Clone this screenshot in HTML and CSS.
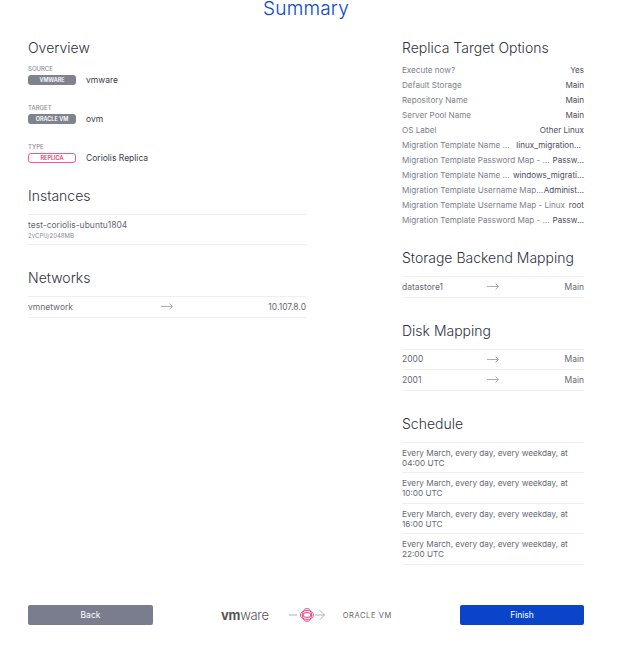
FILE: index.html
```html
<!DOCTYPE html>
<html lang="en">
<head>
    <meta charset="UTF-8">
    <meta name="viewport" content="width=device-width, initial-scale=1.0">
    <title>Summary</title>
    <link rel="stylesheet" href="styles.css">
</head>
<body>
    <div class="page">
        <h1 class="title">Summary</h1>

        <div class="columns">
            <div class="col-left">
                <div class="section overview">
                    <h2>Overview</h2>
                    <div class="field">
                        <div class="field-label">SOURCE</div>
                        <div class="field-value"><span class="pill">VMWARE</span>vmware</div>
                    </div>
                    <div class="field">
                        <div class="field-label">TARGET</div>
                        <div class="field-value"><span class="pill">ORACLE VM</span>ovm</div>
                    </div>
                    <div class="field">
                        <div class="field-label">TYPE</div>
                        <div class="field-value"><span class="pill pill-replica">REPLICA</span>Coriolis Replica</div>
                    </div>
                </div>

                <div class="section">
                    <h2>Instances</h2>
                    <div class="table">
                        <div class="instance">
                            <div class="instance-name">test-coriolis-ubuntu1804</div>
                            <div class="instance-info">2vCPU/2048MB</div>
                        </div>
                    </div>
                </div>

                <div class="section">
                    <h2>Networks</h2>
                    <div class="table">
                        <div class="map-row">
                            <span>vmnetwork</span>
                            <svg class="arrow" viewBox="0 0 12 7"><path d="M0 3.5h11.5M8.5 .5l3 3-3 3"/></svg>
                            <span class="map-target">10.107.8.0</span>
                        </div>
                    </div>
                </div>
            </div>

            <div class="col-right">
                <div class="section options-section">
                    <h2>Replica Target Options</h2>
                    <div class="options">
                        <div class="option"><span class="opt-label">Execute now?</span><span class="opt-value">Yes</span></div>
                        <div class="option"><span class="opt-label">Default Storage</span><span class="opt-value">Main</span></div>
                        <div class="option"><span class="opt-label">Repository Name</span><span class="opt-value">Main</span></div>
                        <div class="option"><span class="opt-label">Server Pool Name</span><span class="opt-value">Main</span></div>
                        <div class="option"><span class="opt-label">OS Label</span><span class="opt-value">Other Linux</span></div>
                        <div class="option"><span class="opt-label">Migration Template Name …</span><span class="opt-value opt-cut">linux_migration…</span></div>
                        <div class="option"><span class="opt-label">Migration Template Password Map - …</span><span class="opt-value opt-cut">Passw…</span></div>
                        <div class="option"><span class="opt-label">Migration Template Name …</span><span class="opt-value">windows_migrati…</span></div>
                        <div class="option option-tight"><span class="opt-label">Migration Template Username Map…</span><span class="opt-value">Administ…</span></div>
                        <div class="option"><span class="opt-label">Migration Template Username Map - Linux</span><span class="opt-value">root</span></div>
                        <div class="option"><span class="opt-label">Migration Template Password Map - …</span><span class="opt-value opt-cut">Passw…</span></div>
                    </div>
                </div>

                <div class="section storage-section">
                    <h2>Storage Backend Mapping</h2>
                    <div class="table">
                        <div class="map-row">
                            <span>datastore1</span>
                            <svg class="arrow" viewBox="0 0 12 7"><path d="M0 3.5h11.5M8.5 .5l3 3-3 3"/></svg>
                            <span class="map-target">Main</span>
                        </div>
                    </div>
                </div>

                <div class="section">
                    <h2>Disk Mapping</h2>
                    <div class="table">
                        <div class="map-row">
                            <span>2000</span>
                            <svg class="arrow" viewBox="0 0 12 7"><path d="M0 3.5h11.5M8.5 .5l3 3-3 3"/></svg>
                            <span class="map-target">Main</span>
                        </div>
                        <div class="map-row">
                            <span>2001</span>
                            <svg class="arrow" viewBox="0 0 12 7"><path d="M0 3.5h11.5M8.5 .5l3 3-3 3"/></svg>
                            <span class="map-target">Main</span>
                        </div>
                    </div>
                </div>

                <div class="section">
                    <h2>Schedule</h2>
                    <div class="table">
                        <div class="schedule-row">Every March, every day, every weekday, at 04:00 UTC</div>
                        <div class="schedule-row">Every March, every day, every weekday, at 10:00 UTC</div>
                        <div class="schedule-row">Every March, every day, every weekday, at 16:00 UTC</div>
                        <div class="schedule-row">Every March, every day, every weekday, at 22:00 UTC</div>
                    </div>
                </div>
            </div>
        </div>

        <div class="footer">
            <button class="btn btn-back">Back</button>
            <div class="logos">
                <span class="logo-vmware"><b>vm</b>ware</span>
                <svg class="logo-flow" viewBox="0 0 36 14">
                    <path class="flow-line" d="M0 7h8M26 7h9.5M31 2.5l4.5 4.5-4.5 4.5"/>
                    <g class="flow-knot">
                        <ellipse cx="18" cy="7" rx="6.5" ry="4.5"/>
                        <ellipse cx="18" cy="7" rx="4.5" ry="6.5"/>
                        <ellipse cx="18" cy="7" rx="4" ry="2.5"/>
                    </g>
                </svg>
                <span class="logo-oracle">ORACLE VM</span>
            </div>
            <button class="btn btn-finish">Finish</button>
        </div>
    </div>
</body>
</html>
```

FILE: styles.css
```css
* {
    box-sizing: border-box;
}

body {
    margin: 0;
    background-color: #fff;
    font-family: Inter, "Noto Sans", sans-serif;
    color: #666975;
    font-size: 8.5px;
}

.page {
    width: 620px;
    height: 658px;
    padding: 0 36px 0 28px;
    display: flex;
    flex-direction: column;
    overflow: hidden;
}

.title {
    margin: 0;
    height: 40px;
    font-size: 19px;
    line-height: 18px;
    font-weight: 300;
    color: #0b47c9;
    text-align: center;
    letter-spacing: 0.2px;
}

.columns {
    display: flex;
    justify-content: space-between;
    height: 565px;
}

.col-left {
    width: 278px;
}

.col-right {
    width: 182px;
}

h2 {
    margin: 0;
    font-size: 14px;
    line-height: 16px;
    font-weight: 300;
    color: #2f3240;
}

.section {
    margin-bottom: 25px;
}

.overview {
    margin-bottom: 15px;
}

.options-section {
    margin-bottom: 22px;
}

.storage-section {
    margin-bottom: 25px;
}

.field {
    margin-top: 9px;
    height: 30px;
}

.field-label {
    font-size: 6px;
    line-height: 8px;
    margin-bottom: 2px;
    font-weight: 500;
    color: #8a8d98;
}

.field-value {
    display: flex;
    align-items: center;
    color: #3a3d4a;
    height: 10px;
}

.pill {
    width: 48px;
    height: 10px;
    margin-right: 10px;
    background-color: #7f838e;
    border-radius: 3px;
    color: #fff;
    font-size: 5.5px;
    font-weight: 600;
    line-height: 10px;
    text-align: center;
}

.pill-replica {
    background-color: #fff;
    border: 1px solid #f5588a;
    color: #f0306e;
    line-height: 8px;
}

.table {
    margin-top: 10px;
    border-top: 1px solid #efeff2;
}

.instance {
    height: 30px;
    padding-top: 5px;
    border-bottom: 1px solid #efeff2;
}

.instance-name {
    line-height: 11px;
}

.instance-info {
    font-size: 6px;
    line-height: 9px;
    color: #8a8d98;
}

.map-row {
    display: grid;
    grid-template-columns: 1fr 12px 1fr;
    align-items: center;
    height: 20.5px;
    border-bottom: 1px solid #efeff2;
}

.map-target {
    text-align: right;
}

.arrow {
    width: 12px;
    height: 7px;
    fill: none;
    stroke: #a4a6b0;
    stroke-width: 0.9;
}

.options {
    margin-top: 7px;
}

.option {
    display: flex;
    justify-content: space-between;
    gap: 3px;
    height: 15px;
    font-size: 8.1px;
    line-height: 15px;
    white-space: nowrap;
}

.option-tight {
    gap: 0;
}

.opt-label {
    color: #7d808c;
}

.opt-value {
    color: #4b4e5b;
}

.opt-cut {
    margin-right: 3px;
}

.schedule-row {
    padding-top: 5px;
    height: 30.5px;
    font-size: 8.2px;
    line-height: 10px;
    border-bottom: 1px solid #efeff2;
}

.footer {
    display: flex;
    justify-content: space-between;
    align-items: center;
}

.btn {
    width: 125px;
    height: 20px;
    border: none;
    border-radius: 2px;
    font-family: inherit;
    font-size: 8.5px;
    color: #fff;
}

.btn-back {
    background-color: #7a7d8d;
}

.btn-finish {
    width: 124px;
    background-color: #0a44c8;
}

.logos {
    display: flex;
    align-items: center;
}

.logo-vmware {
    font-size: 13px;
    font-weight: 300;
    color: #555;
    letter-spacing: -0.3px;
}

.logo-vmware b {
    font-weight: 700;
}

.logo-flow {
    width: 36px;
    height: 14px;
    margin: 0 18px 0 20px;
}

.flow-line {
    fill: none;
    stroke: #a4a6b0;
    stroke-width: 0.9;
}

.flow-knot {
    fill: none;
    stroke: #f0306e;
    stroke-width: 0.9;
}

.logo-oracle {
    font-size: 7.5px;
    color: #666;
    letter-spacing: 0.6px;
}
```
